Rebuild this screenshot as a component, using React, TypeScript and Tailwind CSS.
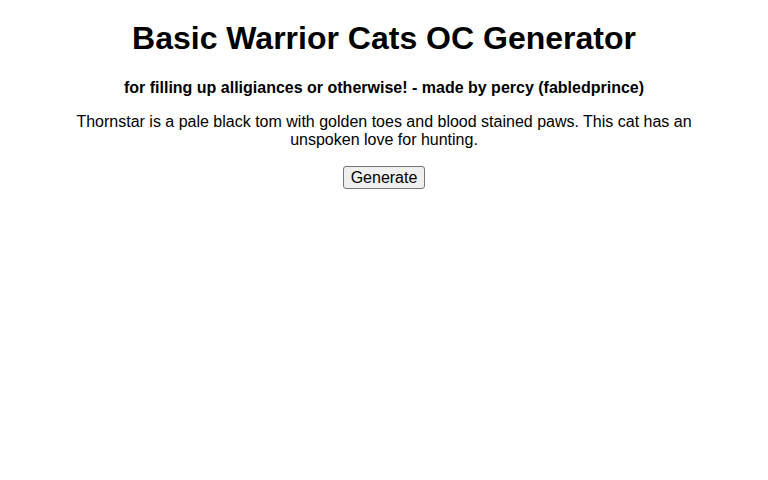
import React, { useState } from "react";

const pelts = ["pale black", "dark gray", "ginger", "silver tabby", "cream"];
const markings = ["golden toes and blood stained paws", "white ears", "a torn ear"];

export default function App() {
	const [cat, setCat] = useState(
		"Thornstar is a pale black tom with golden toes and blood stained paws. This cat has an unspoken love for hunting."
	);

	const generate = () => {
		const pelt = pelts[Math.floor(Math.random() * pelts.length)];
		const mark = markings[Math.floor(Math.random() * markings.length)];
		setCat(`Thornstar is a ${pelt} tom with ${mark}. This cat has an unspoken love for hunting.`);
	};

	return (
		<div className="min-h-[480px] bg-white text-black text-center font-['Liberation_Sans',Arial,sans-serif]">
			<h1 className="pt-[20px] text-[32px] leading-[37px] font-bold">
				Basic Warrior Cats OC Generator
			</h1>
			<h4 className="mt-[22px] text-[16px] leading-[18px] font-bold">
				for filling up alligiances or otherwise! - made by percy (fabledprince)
			</h4>
			<p className="mx-auto mt-[16px] w-[640px] text-[16px] leading-[18px]">{cat}</p>
			<button
				onClick={generate}
				className="mt-[17px] h-[23px] px-[7px] text-[16px] leading-[18px] bg-[#efefef] border border-[#767676] rounded-[3px]"
			>
				Generate
			</button>
		</div>
	);
}
